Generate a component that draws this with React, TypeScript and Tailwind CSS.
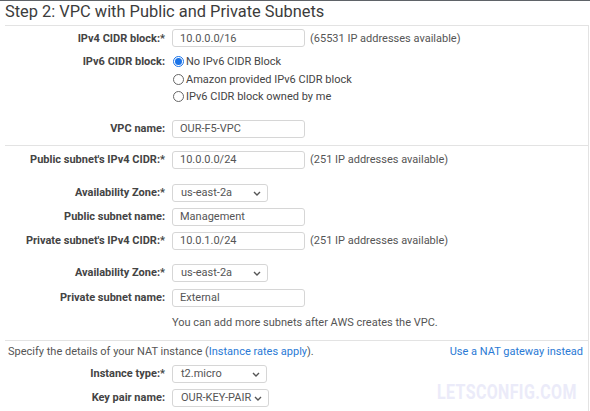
import React from 'react';

function Row({ label, className = '', children }: { label: string; className?: string; children: React.ReactNode }) {
  return (
    <div className={`flex items-center h-[18px] ${className}`}>
      <div className="w-[160px] shrink-0 text-right font-bold text-[#444]">{label}</div>
      <div className="pl-[7px] flex items-center">{children}</div>
    </div>
  );
}

function TextBox({ value }: { value: string }) {
  return (
    <div className="w-[133px] h-[18px] border border-[#d6d6d6] rounded-[3px] pl-[7px] flex items-center text-[#555]">
      {value}
    </div>
  );
}

function Select({ value, w = 'w-[96px]' }: { value: string; w?: string }) {
  return (
    <div className={`${w} h-[18px] border border-[#d6d6d6] rounded-[3px] pl-[8px] pr-[6px] flex items-center justify-between text-[#555]`}>
      <span>{value}</span>
      <svg width="8" height="5" viewBox="0 0 8 5" className="mt-[1px]">
        <path d="M1 1 L4 4 L7 1" fill="none" stroke="#555" strokeWidth="1.4" />
      </svg>
    </div>
  );
}

function Radio({ checked, label }: { checked?: boolean; label: string }) {
  return (
    <div className="flex items-center h-[17.5px] text-[#444]">
      {checked ? (
        <span className="w-[11px] h-[11px] rounded-full border border-[#1a73e8] flex items-center justify-center mr-[2px] ml-[2px]">
          <span className="w-[7px] h-[7px] rounded-full bg-[#1a73e8]" />
        </span>
      ) : (
        <span className="w-[11px] h-[11px] rounded-full border border-[#666] mr-[2px] ml-[2px]" />
      )}
      <span>{label}</span>
    </div>
  );
}

export default function App() {
  return (
    <div className="relative w-[590px] h-[411px] bg-white border-t border-[#5f6368] overflow-hidden text-[11px] leading-none" style={{ fontFamily: 'Roboto, "Liberation Sans", sans-serif' }}>
      <h1 className="h-[24px] pl-[5px] text-[16.4px] leading-[22px] text-[#3c3c3c]">Step 2: VPC with Public and Private Subnets</h1>
      <div className="ml-[5px] w-[584px] border-t border-r border-[#e3e3e3] pb-[20px]">
        <Row label="IPv4 CIDR block:*" className="mt-[3px]">
          <TextBox value="10.0.0.0/16" />
          <span className="ml-[5px] text-[#555]">(65531 IP addresses available)</span>
        </Row>
        <div className="flex mt-[6px]">
          <div className="w-[160px] shrink-0 text-right font-bold text-[#444] h-[17.5px] flex items-center justify-end">IPv6 CIDR block:</div>
          <div className="pl-[6px]">
            <Radio checked label="No IPv6 CIDR Block" />
            <Radio label="Amazon provided IPv6 CIDR block" />
            <Radio label="IPv6 CIDR block owned by me" />
          </div>
        </div>
        <Row label="VPC name:" className="mt-[14px]">
          <TextBox value="OUR-F5-VPC" />
        </Row>
        <div className="mt-[7px] border-t border-[#e3e3e3]" />
        <Row label="Public subnet's IPv4 CIDR:*" className="mt-[5px]">
          <TextBox value="10.0.0.0/24" />
          <span className="ml-[5px] text-[#555]">(251 IP addresses available)</span>
        </Row>
        <Row label="Availability Zone:*" className="mt-[15px]">
          <Select value="us-east-2a" />
        </Row>
        <Row label="Public subnet name:" className="mt-[6px]">
          <TextBox value="Management" />
        </Row>
        <Row label="Private subnet's IPv4 CIDR:*" className="mt-[6px]">
          <TextBox value="10.0.1.0/24" />
          <span className="ml-[5px] text-[#555]">(251 IP addresses available)</span>
        </Row>
        <Row label="Availability Zone:*" className="mt-[14px]">
          <Select value="us-east-2a" />
        </Row>
        <Row label="Private subnet name:" className="mt-[7px]">
          <TextBox value="External" />
        </Row>
        <div className="mt-[8px] h-[16px] flex items-center pl-[167px] text-[#555]">
          You can add more subnets after AWS creates the VPC.
        </div>
        <div className="mt-[9px] border-t border-[#e3e3e3]" />
        <div className="mt-[3px] h-[16px] flex items-center justify-between pl-[3px] pr-[5px] text-[#555]">
          <span>
            Specify the details of your NAT instance (<span className="text-[#2a7ad5]">Instance rates apply</span>).
          </span>
          <span className="text-[#2a7ad5]">Use a NAT gateway instead</span>
        </div>
        <Row label="Instance type:*" className="mt-[5px]">
          <Select value="t2.micro" w="w-[95px]" />
        </Row>
        <Row label="Key pair name:" className="mt-[6px]">
          <Select value="OUR-KEY-PAIR" w="w-[97px]" />
        </Row>
      </div>
      <div className="absolute left-[437px] top-[381px] text-[21px] font-bold text-[#ebebf9] tracking-[0.5px] origin-left scale-x-[0.76]" style={{ fontFamily: 'Roboto, sans-serif' }}>
        LETSCONFIG.COM
      </div>
    </div>
  );
}
